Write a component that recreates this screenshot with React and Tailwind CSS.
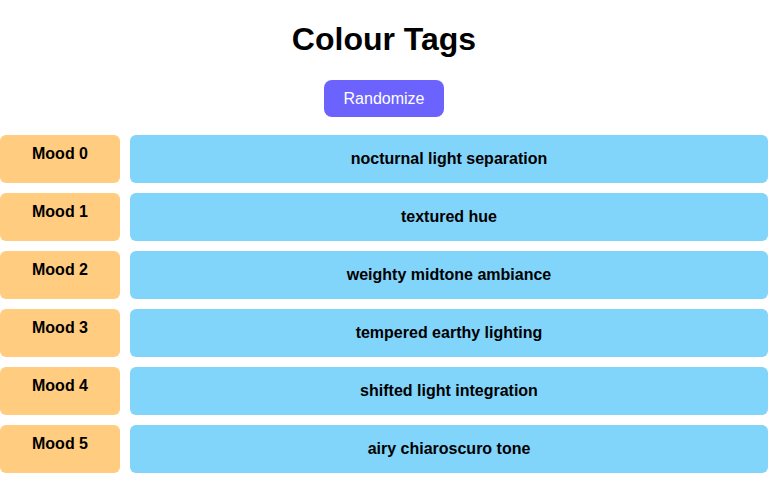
const tags = [
  'nocturnal light separation',
  'textured hue',
  'weighty midtone ambiance',
  'tempered earthy lighting',
  'shifted light integration',
  'airy chiaroscuro tone',
]

export default function App() {
  return (
    <div className="min-h-screen bg-white font-['Liberation_Sans',Arial,sans-serif] text-black">
      <h1 className="pt-[21px] text-center text-[32px] font-bold leading-[37px]">Colour Tags</h1>
      <div className="mt-[22px] flex justify-center">
        <button className="h-[37px] w-[120px] rounded-lg bg-[#6c63ff] text-base text-white">
          Randomize
        </button>
      </div>
      <div className="mt-[18px] flex flex-col gap-[10px]">
        {tags.map((tag, i) => (
          <div key={i} className="flex h-12 gap-[10px]">
            <div className="w-[120px] shrink-0 rounded-md bg-[#ffcc80] pt-[10px] text-center text-base font-bold leading-[18px]">
              Mood {i}
            </div>
            <div className="flex flex-1 items-center justify-center rounded-md bg-[#81d4fa] text-base font-bold">
              {tag}
            </div>
          </div>
        ))}
      </div>
    </div>
  )
}
